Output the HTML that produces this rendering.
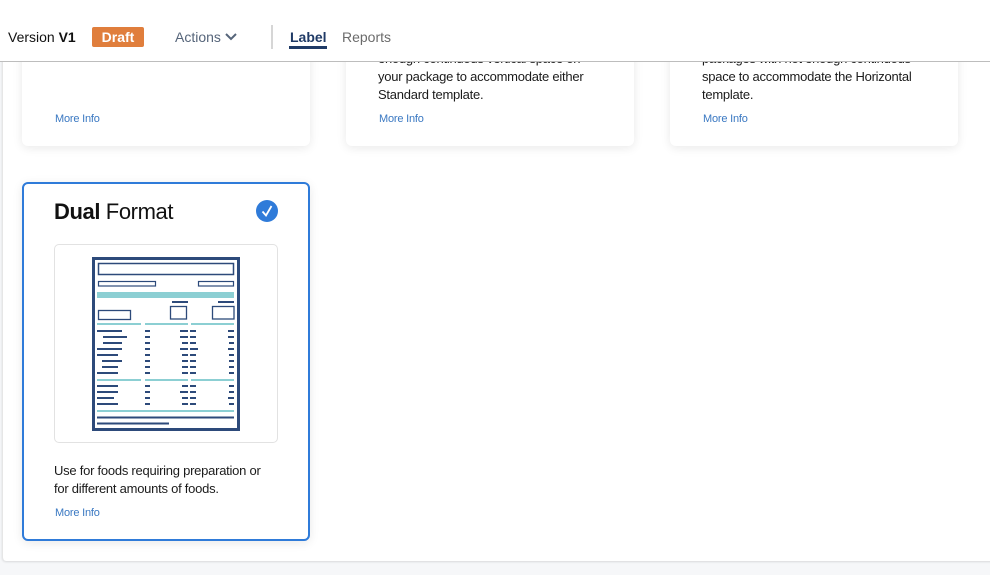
<!DOCTYPE html>
<html><head><meta charset="utf-8">
<style>
*{margin:0;padding:0;box-sizing:border-box}
body{width:990px;height:575px;overflow:hidden;background:#f6f7f9;font-family:"Liberation Sans",sans-serif;position:relative;color:#1b1b1b}
.wrap{position:absolute;left:2px;top:0;width:1000px;height:561px;background:#fff;border-radius:0 0 0 4px;box-shadow:0 1px 2px rgba(0,0,0,.12);border-left:1px solid #e6e6e6}
.hdr{position:absolute;left:0;top:0;width:990px;height:62px;background:#fff;border-bottom:1px solid #bdbdbd;z-index:5;font-size:14px}
.card{position:absolute;background:#fff;border-radius:6px;box-shadow:0 2px 10px rgba(0,0,0,.09)}
.txt{position:absolute;font-size:13px;line-height:18px;letter-spacing:-.25px;color:#1b1b1b}
.more{position:absolute;font-size:11px;color:#3a78c2;letter-spacing:-.2px}
</style></head><body>
<div class="wrap"></div>
<div class="card" style="left:22px;top:40px;width:288px;height:106px"></div>
<div class="card" style="left:346px;top:40px;width:288px;height:106px"></div>
<div class="card" style="left:670px;top:40px;width:288px;height:106px"></div>
<div class="more" style="left:55px;top:113px">More Info</div>
<div class="txt" style="left:378px;top:50px">enough continuous vertical space on<br>your package to accommodate either<br>Standard template.</div>
<div class="more" style="left:379px;top:113px">More Info</div>
<div class="txt" style="left:702px;top:50px">packages with not enough continuous<br>space to accommodate the Horizontal<br>template.</div>
<div class="more" style="left:703px;top:113px">More Info</div>

<div class="card" style="left:22px;top:182px;width:288px;height:359px;border:2px solid #2f7bd9;border-radius:6px"></div>
<div style="position:absolute;left:54px;top:199px;font-size:22px;letter-spacing:-.4px;color:#111"><b>Dual</b> Format</div>
<div style="position:absolute;left:256px;top:200px;width:22px;height:22px;border-radius:50%;background:#2f7bd9"><svg width="22" height="22"><path d="M6.5 11.5L10 15.5L15.5 6" fill="none" stroke="#fff" stroke-width="1.8"/></svg></div>
<div style="position:absolute;left:54px;top:244px;width:224px;height:199px;border:1px solid #e2e2e2;border-radius:5px;background:#fff"></div>
<svg style="position:absolute;left:0;top:0" width="990" height="575">
<g fill="none" stroke="#2d4a7a">
<rect x="93.5" y="258.5" width="145" height="171" stroke-width="3"/>
<rect x="98.5" y="263.5" width="135" height="11" stroke-width="1.5"/>
<rect x="98.5" y="281.5" width="57" height="4.5" stroke-width="1.2"/>
<rect x="198.5" y="281.5" width="35" height="4.5" stroke-width="1.2"/>
<rect x="98.5" y="310.5" width="32" height="9" stroke-width="1.3"/>
<rect x="170.5" y="306.5" width="16" height="12.5" stroke-width="1.3"/>
<rect x="212.5" y="306.5" width="21.5" height="12.5" stroke-width="1.3"/>
</g>
<g stroke="#8ccfd3">
<line x1="97" y1="295" x2="234" y2="295" stroke-width="6"/>
<path d="M97 324H141M145 324H188M191 324H234M97 380H141M145 380H188M191 380H234M97 411H234" stroke-width="2"/>
</g>
<g stroke="#2d4a7a" stroke-width="2">
<path d="M172 302H188M218 302H234"/>
<path d="M97 331H122M103 337H127M103 343H122M97 349H122M97 355H118M102 361H122M102 367H118M97 373H118M97 386H118M97 392H118M97 398H114M97 404H118"/>
<path d="M145 331H150M145 337H150M145 343H150M145 349H150M145 355H150M145 361H150M145 367H150M145 373H150M145 386H150M145 392H150M145 398H150M145 404H150"/>
<path d="M180 331H188M180 337H188M182 343H188M180 349H188M182 355H188M182 361H188M182 367H188M182 373H188M182 386H188M180 392H188M182 398H188M182 404H188"/>
<path d="M190 331H196M190 337H196M190 343H196M190 349H198M190 355H196M190 361H196M190 367H196M190 373H196M190 386H196M190 392H196M190 398H196M190 404H196"/>
<path d="M228 331H234M228 337H234M229 343H234M228 349H234M229 355H234M229 361H234M229 367H234M229 373H234M229 386H234M229 392H234M228 398H234M229 404H234"/>
<path d="M97 417.5H234M97 423.5H169"/>
</g>
</svg>
<div class="txt" style="left:54px;top:462px">Use for foods requiring preparation or<br>for different amounts of foods.</div>
<div class="more" style="left:55px;top:507px">More Info</div>

<div class="hdr">
<div style="position:absolute;left:8px;top:29px;color:#111">Version <b>V1</b></div>
<div style="position:absolute;left:92px;top:27px;width:52px;height:20px;background:#e07e3c;border-radius:2px;color:#fff;font-weight:bold;text-align:center;line-height:20px">Draft</div>
<div style="position:absolute;left:175px;top:29px;color:#56657a">Actions <svg width="12" height="8" style="vertical-align:1px"><path d="M1 1L6 6L11 1" fill="none" stroke="#56657a" stroke-width="2"/></svg></div>
<div style="position:absolute;left:271px;top:25px;width:2px;height:24px;background:#d6d6d6"></div>
<div style="position:absolute;left:290px;top:29px;color:#1f3a66;font-weight:bold">Label</div>
<div style="position:absolute;left:289px;top:46px;width:38px;height:3px;background:#1f3a66"></div>
<div style="position:absolute;left:342px;top:29px;color:#6b6b6b">Reports</div>
</div>
</body></html>
